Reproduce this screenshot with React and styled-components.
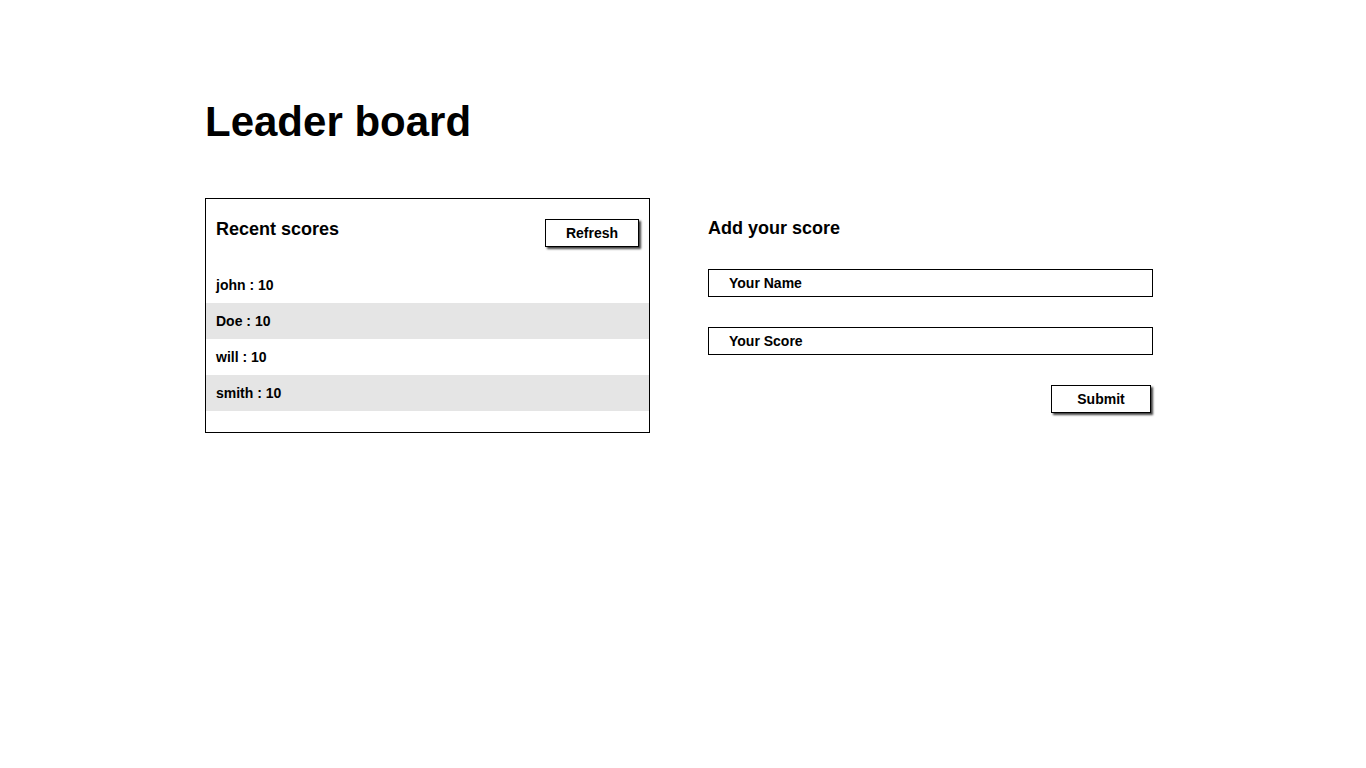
import React from 'react';
import styled, { createGlobalStyle } from 'styled-components';

const GlobalStyle = createGlobalStyle`
  body {
    margin: 0;
    background: #ffffff;
    color: #000000;
    font-family: "Liberation Sans", Arial, sans-serif;
  }
`;

const Page = styled.div`
  padding: 97px 0 0 205px;
`;

const Title = styled.h1`
  margin: 0 0 52px;
  font-size: 42px;
  font-weight: bold;
  line-height: 49px;
`;

const Columns = styled.div`
  display: grid;
  grid-template-columns: 445px 445px;
  column-gap: 58px;
  align-items: start;
`;

const Panel = styled.div`
  border: 1px solid #000;
  padding-bottom: 21px;
`;

const PanelHeader = styled.div`
  display: flex;
  justify-content: space-between;
  align-items: flex-start;
  padding: 20px 10px 0 10px;
  margin-bottom: 20px;
`;

const Heading = styled.h2`
  margin: 0;
  font-size: 18px;
  font-weight: bold;
  line-height: 20px;
`;

const Button = styled.button`
  width: ${(p) => p.$width}px;
  height: 28px;
  padding: 0;
  background: #fff;
  border: 1px solid #000;
  box-shadow: 2px 2px 2px rgba(0, 0, 0, 0.75);
  font-family: "Liberation Sans", Arial, sans-serif;
  font-size: 14px;
  font-weight: bold;
  color: #000;
  cursor: pointer;
`;

const ScoreList = styled.ul`
  list-style: none;
  margin: 0;
  padding: 0;
`;

const ScoreRow = styled.li`
  height: 36px;
  line-height: 36px;
  padding: 0 10px;
  font-size: 14px;
  font-weight: bold;
  background: ${(p) => (p.$shaded ? '#e5e5e5' : 'transparent')};
`;

const Form = styled.form`
  display: flex;
  flex-direction: column;
  padding-top: 20px;
`;

const FormHeading = styled(Heading)`
  margin-bottom: 31px;
`;

const Input = styled.input`
  box-sizing: border-box;
  width: 100%;
  height: 28px;
  margin: 0 0 30px;
  padding: 0 0 0 20px;
  border: 1px solid #000;
  outline: none;
  font-family: "Liberation Sans", Arial, sans-serif;
  font-size: 14px;
  font-weight: bold;
  color: #000;

  &::placeholder {
    color: #000;
    opacity: 1;
  }
`;

const FormActions = styled.div`
  display: flex;
  justify-content: flex-end;
  padding-right: 2px;
`;

const scores = [
  { name: 'john', score: 10 },
  { name: 'Doe', score: 10 },
  { name: 'will', score: 10 },
  { name: 'smith', score: 10 },
];

const App = () => {
  return (
    <>
      <GlobalStyle />
      <Page>
        <Title>Leader board</Title>
        <Columns>
          <Panel>
            <PanelHeader>
              <Heading>Recent scores</Heading>
              <Button type="button" $width={94}>Refresh</Button>
            </PanelHeader>
            <ScoreList>
              {scores.map((s, i) => (
                <ScoreRow key={s.name} $shaded={i % 2 === 1}>
                  {s.name} : {s.score}
                </ScoreRow>
              ))}
            </ScoreList>
          </Panel>

          <Form onSubmit={(e) => e.preventDefault()}>
            <FormHeading>Add your score</FormHeading>
            <Input placeholder="Your Name" />
            <Input placeholder="Your Score" />
            <FormActions>
              <Button type="submit" $width={100}>Submit</Button>
            </FormActions>
          </Form>
        </Columns>
      </Page>
    </>
  );
};

export default App;
